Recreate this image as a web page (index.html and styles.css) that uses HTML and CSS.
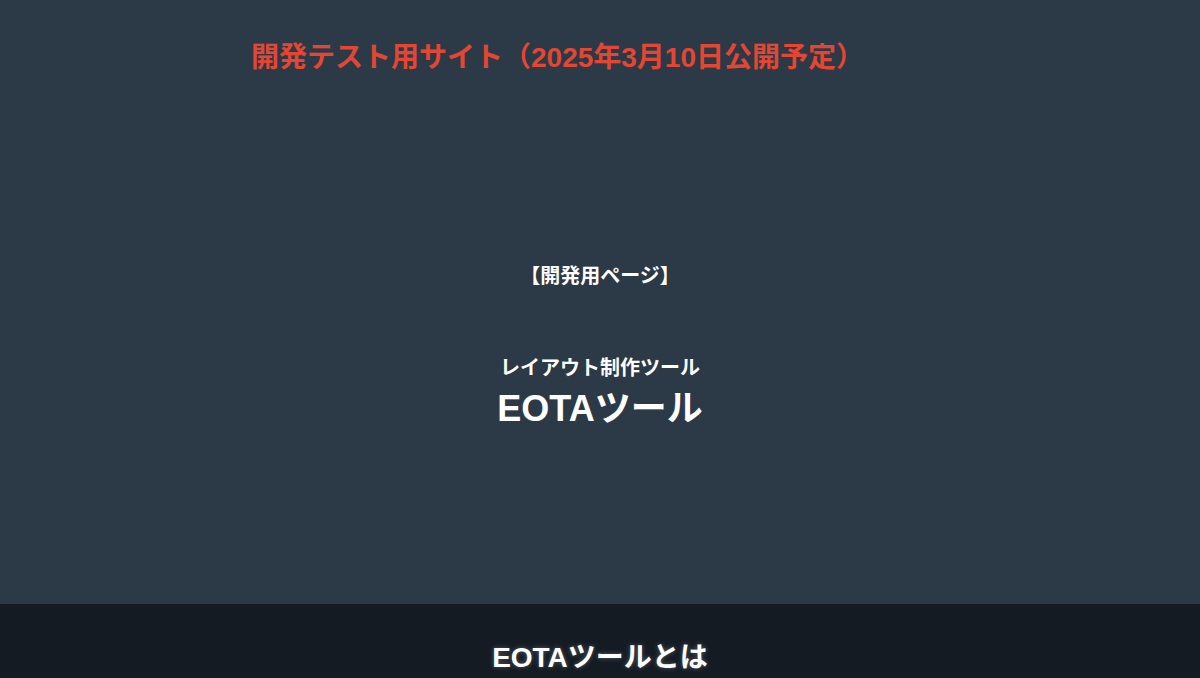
FILE: index.html
```html
<!DOCTYPE html>
<html lang="ja">

<head>
  <meta charset="UTF-8">
  <meta name="viewport" content="width=device-width, initial-scale=1.0">
  <title>EOTAツール</title>
  <link rel="stylesheet" href="styles.css">
</head>

<body>
  <header class="hero">
    <div class="notice">開発テスト用サイト（2025年3月10日公開予定）</div>
    <div class="hero-content">
      <p class="hero-label">【開発用ページ】</p>
      <p class="hero-subtitle">レイアウト制作ツール</p>
      <h1 class="hero-title">EOTAツール</h1>
    </div>
  </header>

  <section class="about">
    <h2 class="about-title">EOTAツールとは</h2>
  </section>
</body>

</html>
```
FILE: styles.css
```css
body {
  margin: 0;
  font-family: "Liberation Sans", "Noto Sans CJK JP", sans-serif;
  font-weight: bold;
  color: #fff;
  background-color: #151b23;
}

.hero {
  padding: 38px 0 170px;
  background-color: #2c3946;
}

.notice {
  max-width: 698px;
  margin: 0 auto;
  font-size: 28px;
  line-height: 40px;
  color: #e34633;
}

.hero-content {
  padding-top: 183px;
  text-align: center;
}

.hero-label,
.hero-subtitle {
  margin: 0;
  font-size: 20px;
  line-height: 30px;
}

.hero-subtitle {
  margin-top: 62px;
}

.hero-title {
  margin: 0;
  font-size: 36px;
  line-height: 51px;
}

.about {
  padding-top: 35px;
  text-align: center;
}

.about-title {
  margin: 0;
  font-size: 28px;
  line-height: 38px;
  text-shadow: 0 0 5px rgba(255, 255, 255, 0.3);
}
```
